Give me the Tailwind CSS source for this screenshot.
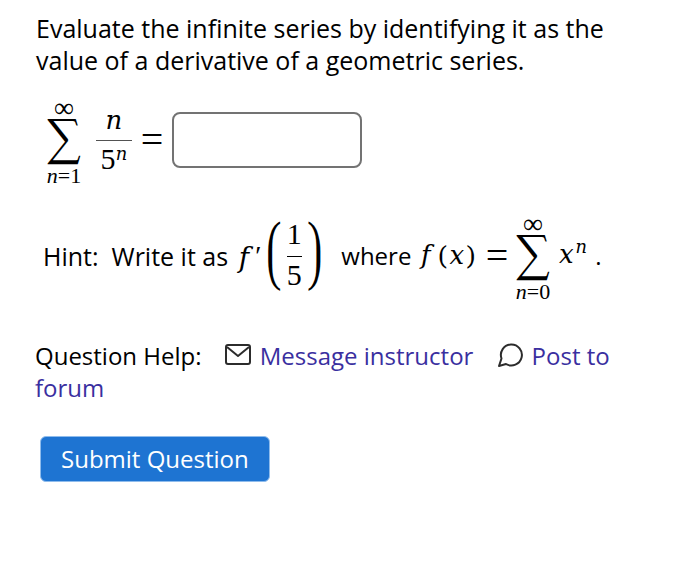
<!DOCTYPE html>
<html lang="en">
<head>
<meta charset="utf-8">
<meta name="viewport" content="width=device-width, initial-scale=1">
<title>Infinite series question</title>
<script src="https://cdn.jsdelivr.net/npm/@tailwindcss/browser@4"></script>
</head>
<body class="bg-white text-black font-['Trebuchet_MS','Open_Sans',sans-serif] text-2xl leading-8">
<main class="pl-9 pr-16 pt-3">
  <p class="text-[25px]">Evaluate the infinite series by identifying it as the value of a derivative of a geometric series.</p>

  <div class="mt-4 flex items-center pl-2 font-['Liberation_Serif',serif]">
    <div class="flex w-10 flex-col items-center pt-1">
      <span class="flex h-6 items-center text-[28px]">∞</span>
      <span class="flex h-11 items-center"><math class="text-[30px] font-['DejaVu_Math_TeX_Gyre',math]"><mstyle displaystyle="true"><mo lspace="0" rspace="0">∑</mo></mstyle></math></span>
      <span class="flex h-6 items-center text-[22px]"><i>n</i>=1</span>
    </div>
    <div class="ml-3 flex w-9 flex-col items-center text-[30px]">
      <span class="flex h-9 items-center"><math class="text-[26px] font-['DejaVu_Math_TeX_Gyre',math]"><mi>n</mi></math></span>
      <span class="h-px w-full bg-neutral-600"></span>
      <span class="flex h-9 items-center">5<math class="mb-2 text-[18px] font-['DejaVu_Math_TeX_Gyre',math]"><mi>n</mi></math></span>
    </div>
    <label for="answer" class="ml-2 w-6 text-center text-[40px]">=</label>
    <input id="answer" type="text" aria-label="Value of the series" class="ml-2 h-14 w-[190px] rounded-lg border-2 border-neutral-500 bg-white px-3">
  </div>

  <div class="mt-5 flex items-center whitespace-pre pl-[7px]">
    <span class="text-[25px]">Hint:  Write it as </span>
    <math class="text-[28px] font-['DejaVu_Math_TeX_Gyre',math]"><mi>f</mi></math>
    <span class="w-2 font-['Liberation_Serif',serif] text-[28px]">′</span>
    <math class="text-[32px] font-['DejaVu_Math_TeX_Gyre',math]"><mstyle displaystyle="true"><mrow><mo>(</mo><mspace width="4px"/><mfrac linethickness="1px"><mn class="font-['Liberation_Serif',serif] text-[30px]">1</mn><mn class="font-['Liberation_Serif',serif] text-[30px]">5</mn></mfrac><mspace width="4px"/><mo>)</mo></mrow></mstyle></math>
    <span class="ml-4 w-19">where </span>
    <math class="text-[26px] font-['DejaVu_Math_TeX_Gyre',math]"><mi>f</mi><mo stretchy="false">(</mo><mi>x</mi><mo stretchy="false">)</mo></math>
    <span class="ml-2 w-6 text-center font-['Liberation_Serif',serif] text-[40px]">=</span>
    <div class="ml-1 flex w-10 flex-col items-center pt-1 font-['Liberation_Serif',serif]">
      <span class="flex h-6 items-center text-[28px]">∞</span>
      <span class="flex h-11 items-center"><math class="text-[30px] font-['DejaVu_Math_TeX_Gyre',math]"><mstyle displaystyle="true"><mo lspace="0" rspace="0">∑</mo></mstyle></math></span>
      <span class="flex h-6 items-center text-[22px]"><i>n</i>=0</span>
    </div>
    <span class="ml-1 flex items-center"><math class="text-[26px] font-['DejaVu_Math_TeX_Gyre',math]"><mi>x</mi></math><math class="mb-4 text-[18px] font-['DejaVu_Math_TeX_Gyre',math]"><mi>n</mi></math></span>
    <span class="ml-2">.</span>
  </div>

  <p class="-ml-px mt-9">Question Help:
    <svg class="ml-4 mr-1 inline-block h-7 w-7 align-[-4px]" viewBox="0 0 28 28" fill="none" stroke="#2c2c2c" stroke-width="2" stroke-linejoin="round" aria-hidden="true"><rect x="2" y="4" width="24" height="19" rx="2"/><path d="M3 6l11 9L25 6"/></svg><a href="#" class="ml-1 text-[#3a2fa0]">Message instructor</a>
    <svg class="ml-4 mr-1 inline-block h-7 w-7 align-[-4px]" viewBox="0 0 28 28" fill="none" stroke="#2c2c2c" stroke-width="2" stroke-linejoin="round" aria-hidden="true"><path d="M5.500 17.500L3 25l7-2A10.500 10.500 0 1 0 5.500 17.500z"/></svg><a href="#" class="ml-1 text-[#3a2fa0]">Post to forum</a>
  </p>

  <button type="button" class="ml-1 mt-8 h-[46px] rounded-md border border-[#8fbcec] bg-[#1e74d2] px-5 text-white">Submit Question</button>
</main>
</body>
</html>
